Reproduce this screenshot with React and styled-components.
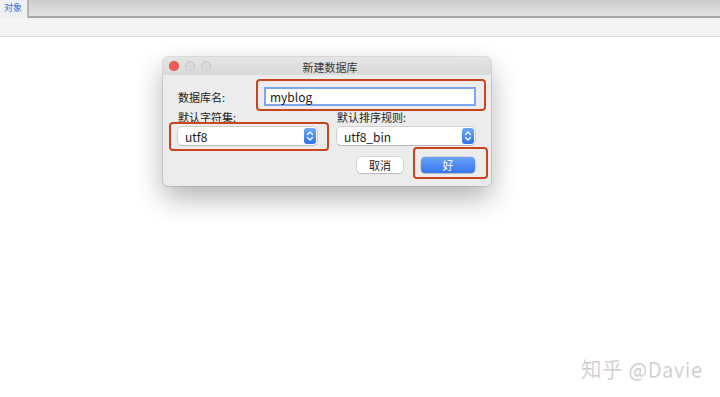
import React from 'react'
import styled, { createGlobalStyle } from 'styled-components'

const GlobalStyle = createGlobalStyle`
    html, body, #root {
        margin: 0;
        height: 100%;
    }
    body {
        font-family: "Noto Sans CJK SC", "Liberation Sans", sans-serif;
        background: #ffffff;
    }
`

const Page = styled.div`
    position: relative;
    height: 397px;
    overflow: hidden;
    background: #fff;
`

const TabBar = styled.div`
    display: flex;
    height: 18px;
`

const Tab = styled.div`
    width: 29px;
    box-sizing: border-box;
    padding-left: 4px;
    background: #eef0f3;
    border-right: 2px solid #b4b4b4;
    color: #3a6fd8;
    font-size: 9px;
    line-height: 16px;
`

const TabFiller = styled.div`
    flex: 1;
    background: linear-gradient(#cbcbcb, #e4e4e4);
    border-bottom: 2px solid #a6a6a6;
`

const Toolbar = styled.div`
    height: 18px;
    background: #f4f4f4;
    border-bottom: 1px solid #dcdcdc;
`

const Dialog = styled.div`
    margin: 20px 0 0 163px;
    width: 328px;
    height: 129px;
    border-radius: 5px;
    background: #ececec;
    box-shadow: 0 12px 28px rgba(0, 0, 0, 0.3), 0 0 0 1px rgba(0, 0, 0, 0.1);
`

const TitleBar = styled.div`
    display: grid;
    grid-template-columns: 1fr auto 1fr;
    align-items: center;
    height: 18px;
    padding-left: 6px;
    border-radius: 5px 5px 0 0;
    background: linear-gradient(#e4e4e4, #dadada);
`

const Lights = styled.div`
    display: flex;
    gap: 6px;
`

const Light = styled.span`
    width: 10px;
    height: 10px;
    border-radius: 50%;
    background: ${p => p.$color};
    box-shadow: inset 0 0 0 0.5px rgba(0, 0, 0, 0.12);
`

const Title = styled.div`
    font-size: 11px;
    color: #3a3a3a;
    margin-top: 1px;
`

const Body = styled.div`
    padding: 12px 15px 0 15px;
    font-size: 11px;
    color: #222;
`

const NameRow = styled.div`
    display: flex;
    align-items: center;
`

const NameLabel = styled.div`
    width: 86px;
`

// orange annotation frame drawn over the wrapped control
const Highlight = styled.div`
    position: relative;
    ${p => p.$grow && 'flex: 1;'}
    &::after {
        content: '';
        position: absolute;
        top: ${p => p.$t}px;
        right: ${p => p.$r}px;
        bottom: ${p => p.$b}px;
        left: ${p => p.$l}px;
        border: 2px solid #c8461f;
        border-radius: 4px;
        pointer-events: none;
    }
`

const TextInput = styled.div`
    height: 19px;
    box-sizing: border-box;
    background: #fff;
    border: 2px solid #7ea3ef;
    font-size: 12px;
    line-height: 15px;
    padding-left: 4px;
    color: #1a1a1a;
`

const Columns = styled.div`
    display: grid;
    grid-template-columns: 139px 138px;
    column-gap: 20px;
    margin-top: 4px;
`

const FieldLabel = styled.div`
    line-height: 14px;
    margin-bottom: 3px;
`

const Select = styled.div`
    display: flex;
    align-items: center;
    justify-content: space-between;
    height: 18px;
    box-sizing: border-box;
    background: #fff;
    border-radius: 4px;
    box-shadow: 0 0 0 0.5px rgba(0, 0, 0, 0.22), 0 1px 1px rgba(0, 0, 0, 0.12);
    padding: 0 1px 0 7px;
    font-size: 12px;
    color: #1a1a1a;
`

const Stepper = styled.div`
    width: 12px;
    height: 16px;
    border-radius: 3px;
    background: linear-gradient(#6ea8f8, #2f73ea);
    display: flex;
    align-items: center;
    justify-content: center;
`

const Buttons = styled.div`
    display: flex;
    justify-content: flex-end;
    gap: 18px;
    margin: 12px 1px 0 0;
`

const Button = styled.div`
    width: ${p => p.$w}px;
    height: 16px;
    border-radius: 4px;
    font-size: 11px;
    line-height: 16px;
    text-align: center;
    background: ${p => (p.$primary ? 'linear-gradient(#6ba3f8, #3477ef)' : '#fff')};
    color: ${p => (p.$primary ? '#fff' : '#222')};
    box-shadow: 0 0 0 0.5px rgba(0, 0, 0, 0.2), 0 1px 1px rgba(0, 0, 0, 0.12);
`

const Watermark = styled.div`
    position: absolute;
    top: 354px;
    right: 17px;
    font-size: 20px;
    font-weight: 300;
    letter-spacing: 1px;
    color: #cdcdcd;
    text-shadow: 0 1px 1px rgba(0, 0, 0, 0.15);
`

const Chevrons = () => (
    <svg width="8" height="12" viewBox="0 0 8 12">
        <path d="M1.5 4.5 L4 2 L6.5 4.5 M1.5 7.5 L4 10 L6.5 7.5" stroke="#fff" strokeWidth="1.3" fill="none" strokeLinecap="round" strokeLinejoin="round" />
    </svg>
)

export default function App() {
    return (
        <Page>
            <GlobalStyle />
            <TabBar>
                <Tab>对象</Tab>
                <TabFiller />
            </TabBar>
            <Toolbar />
            <Dialog>
                <TitleBar>
                    <Lights>
                        <Light $color="#ec5b54" />
                        <Light $color="#d9d9d9" />
                        <Light $color="#d9d9d9" />
                    </Lights>
                    <Title>新建数据库</Title>
                    <span />
                </TitleBar>
                <Body>
                    <NameRow>
                        <NameLabel>数据库名:</NameLabel>
                        <Highlight $grow $t={-8} $r={-10} $b={-5} $l={-8}>
                            <TextInput>myblog</TextInput>
                        </Highlight>
                    </NameRow>
                    <Columns>
                        <div>
                            <FieldLabel>默认字符集:</FieldLabel>
                            <Highlight $t={-5} $r={-12} $b={-6} $l={-9}>
                                <Select>
                                    utf8
                                    <Stepper><Chevrons /></Stepper>
                                </Select>
                            </Highlight>
                        </div>
                        <div>
                            <FieldLabel>默认排序规则:</FieldLabel>
                            <Select>
                                utf8_bin
                                <Stepper><Chevrons /></Stepper>
                            </Select>
                        </div>
                    </Columns>
                    <Buttons>
                        <Button $w={46}>取消</Button>
                        <Highlight $t={-10} $r={-13} $b={-6} $l={-8}>
                            <Button $w={54} $primary>好</Button>
                        </Highlight>
                    </Buttons>
                </Body>
            </Dialog>
            <Watermark>知乎 @Davie</Watermark>
        </Page>
    )
}
